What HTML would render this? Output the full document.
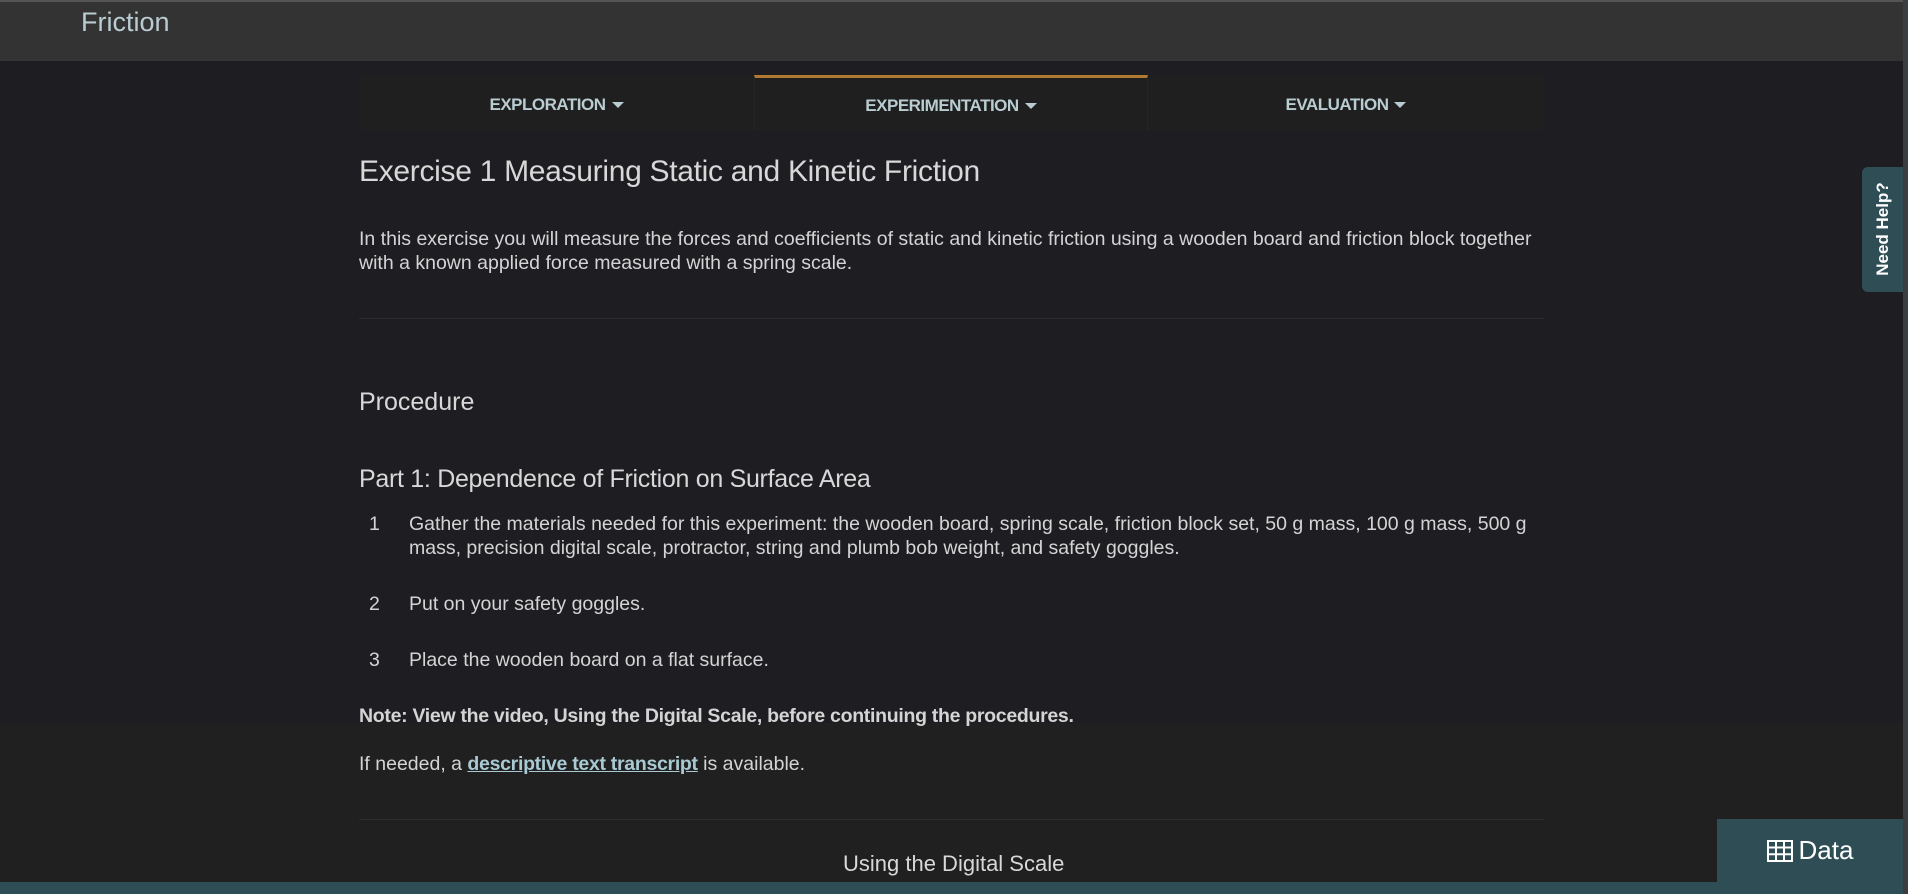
<!DOCTYPE html>
<html><head><meta charset="utf-8"><style>
*{margin:0;padding:0;box-sizing:border-box}
html,body{width:1908px;height:894px;overflow:hidden}
body{background:#1e1e22;font-family:"Liberation Sans",sans-serif;color:#d4d4d4;position:relative}
.a{position:absolute;white-space:nowrap}
#hdr{position:absolute;left:0;top:0;width:1908px;height:61px;background:#333;border-top:2px solid #555}
#low{position:absolute;left:0;top:723px;width:1908px;height:171px;background:#202020}
.tab{position:absolute;top:75px;height:55px;background:#1f1f1f;color:#b8ccd2;font-weight:bold;font-size:17px;letter-spacing:-0.5px;display:flex;align-items:center;justify-content:center;padding-top:4px}
.tab span.c{display:inline-block;width:0;height:0;border-left:6px solid transparent;border-right:6px solid transparent;border-top:6px solid #b8ccd2;margin-left:6px}
.hr{position:absolute;left:359px;width:1185px;height:1px;background:#2c2c30}
.x{font-size:19.5px;line-height:24px}
</style></head><body>
<div id="low"></div>
<div id="hdr"></div>
<div class="a" style="left:81px;top:7px;font-size:27px;color:#b9ccd2">Friction</div>

<div class="tab" style="left:359px;width:395px">EXPLORATION<span class="c"></span></div>
<div class="tab" style="left:754px;width:394px;border-top:3px solid #b07a30;border-left:1px solid #262626;border-right:1px solid #262626">EXPERIMENTATION<span class="c"></span></div>
<div class="tab" style="left:1148px;width:396px">EVALUATION<span class="c"></span></div>

<div class="a" style="left:359px;top:155px;font-size:30px;color:#d8d8d8;letter-spacing:-0.3px">Exercise 1 Measuring Static and Kinetic Friction</div>
<div class="a x" style="left:359px;top:227px;white-space:normal;width:1192px">In this exercise you will measure the forces and coefficients of static and kinetic friction using a wooden board and friction block together with a known applied force measured with a spring scale.</div>
<div class="hr" style="top:318px"></div>

<div class="a" style="left:359px;top:388px;font-size:25px;color:#d8d8d8">Procedure</div>
<div class="a" style="left:359px;top:465px;font-size:25px;color:#d8d8d8;letter-spacing:-0.3px">Part 1: Dependence of Friction on Surface Area</div>

<div class="a x" style="left:369px;top:512px">1</div>
<div class="a x" style="left:409px;top:512px;white-space:normal;width:1140px">Gather the materials needed for this experiment: the wooden board, spring scale, friction block set, 50 g mass, 100 g mass, 500 g mass, precision digital scale, protractor, string and plumb bob weight, and safety goggles.</div>
<div class="a x" style="left:369px;top:592px">2</div>
<div class="a x" style="left:409px;top:592px">Put on your safety goggles.</div>
<div class="a x" style="left:369px;top:648px">3</div>
<div class="a x" style="left:409px;top:648px">Place the wooden board on a flat surface.</div>

<div class="a x" style="left:359px;top:704px;font-weight:bold;letter-spacing:-0.3px">Note: View the video, Using the Digital Scale, before continuing the procedures.</div>
<div class="a x" style="left:359px;top:752px">If needed, a <b style="color:#a9c9d3;text-decoration:underline;letter-spacing:-0.3px">descriptive text transcript</b> is available.</div>
<div class="hr" style="top:819px"></div>
<div class="a" style="left:843px;top:851px;font-size:22px;color:#d8d8d8">Using the Digital Scale</div>

<div style="position:absolute;left:0;top:882px;width:1903px;height:12px;background:#2f4d55"></div>
<div style="position:absolute;left:1717px;top:819px;width:186px;height:75px;background:#2f4d55;color:#fff;font-size:26px;display:flex;align-items:center;justify-content:center;padding-bottom:12px">
<svg width="26" height="22" viewBox="0 0 26 22" style="margin-right:6px"><g fill="none" stroke="#fff" stroke-width="2"><rect x="1" y="1" width="24" height="20"/><path d="M1 7.5H25M1 14.2H25M9 1V21M17 1V21"/></g></svg>Data</div>

<div style="position:absolute;left:1862px;top:167px;width:42px;height:125px;background:#2f4d55;border-radius:6px 0 0 6px"></div>
<div class="a" style="left:1883px;top:229px;transform:translate(-50%,-50%) rotate(-90deg);color:#fff;font-weight:bold;font-size:17px">Need Help?</div>
<div style="position:absolute;left:1903px;top:0;width:5px;height:894px;background:#3a3d40"></div>
</body></html>
